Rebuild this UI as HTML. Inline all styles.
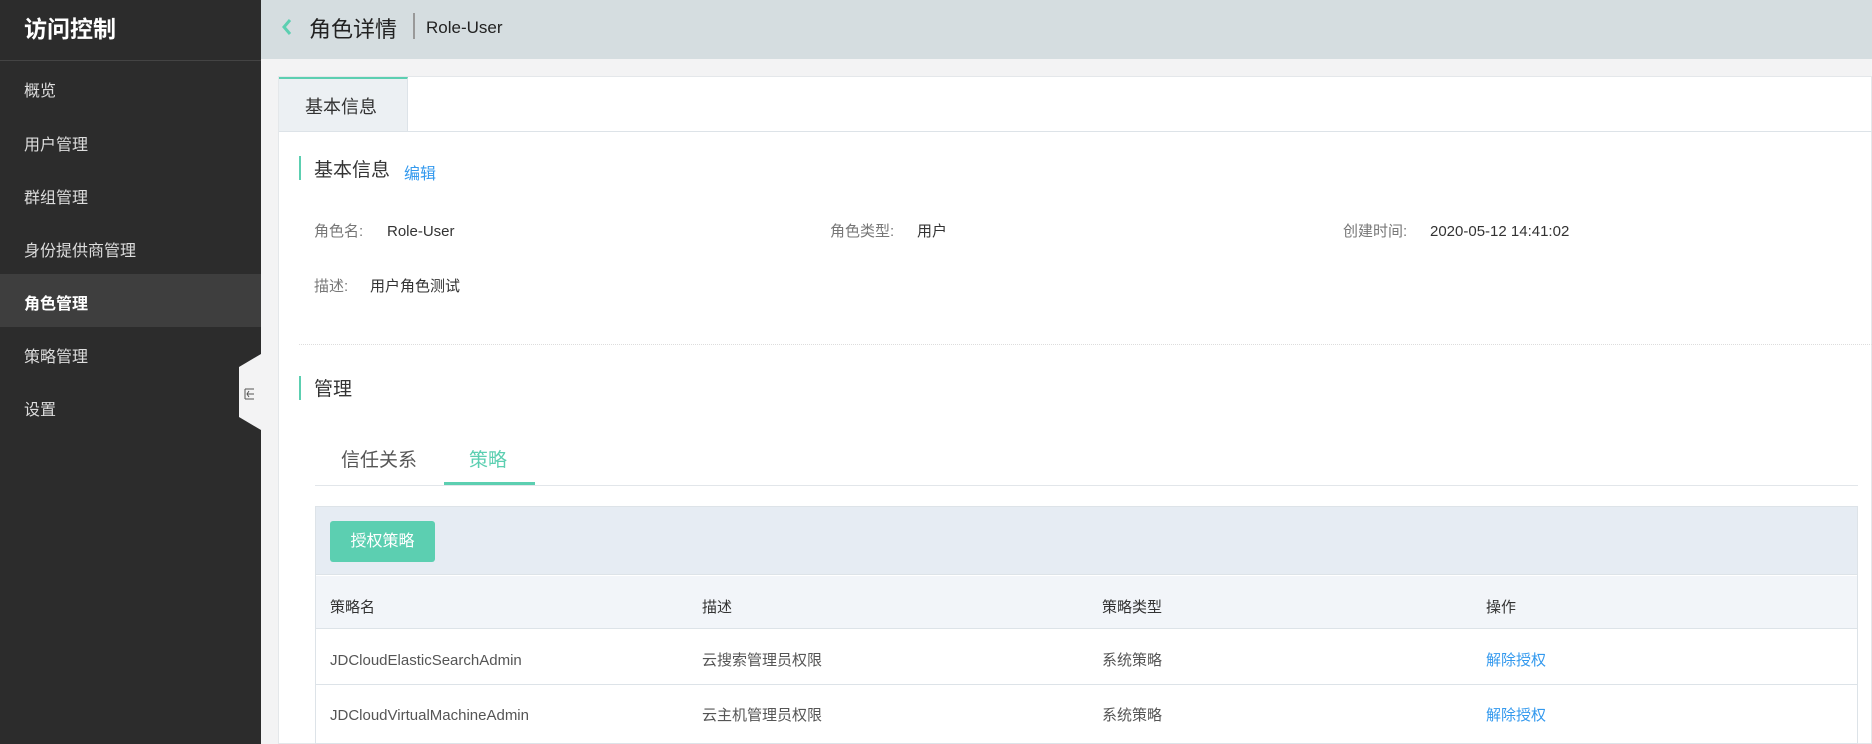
<!DOCTYPE html>
<html><head><meta charset="utf-8"><style>
*{margin:0;padding:0;box-sizing:border-box}
body{width:1872px;height:744px;overflow:hidden;background:#f3f3f4;font-family:"Liberation Sans","Noto Sans CJK SC",sans-serif;position:relative;color:#333}
.a{position:absolute;white-space:nowrap}
.side{left:0;top:0;width:261px;height:744px;background:#2c2c2c}
.mi{left:24px;color:#ddd;font-size:16px}
.lbl{color:#777;font-size:15px}
.val{color:#333;font-size:15px}
.bar{width:2px;background:#5ccfb1}
.td{font-size:15px;color:#555}
</style></head><body>
<div class="a side"></div>
<div class="a" style="left:24px;top:10px;font-size:23px;color:#fff;font-weight:bold">访问控制</div>
<div class="a" style="left:0;top:60px;width:261px;height:1px;background:#444"></div>
<div class="a mi" style="top:77px">概览</div>
<div class="a mi" style="top:131px">用户管理</div>
<div class="a mi" style="top:184px">群组管理</div>
<div class="a mi" style="top:237px">身份提供商管理</div>
<div class="a" style="left:0;top:274px;width:261px;height:53px;background:#3e3e3e"></div>
<div class="a mi" style="top:290px;color:#fff;font-weight:bold">角色管理</div>
<div class="a mi" style="top:343px">策略管理</div>
<div class="a mi" style="top:396px">设置</div>
<svg class="a" style="left:239px;top:354px" width="22" height="76"><polygon points="22,0 0,13 0,63 22,76" fill="#f3f3f4"/><path d="M6 35h9M8 40h7M6 45h9M6 35v10M10 37l-2 3 2 3" stroke="#555" stroke-width="1" fill="none"/></svg>
<div class="a" style="left:261px;top:0;width:1611px;height:59px;background:#d5dde0"></div>
<svg class="a" style="left:280px;top:17px" width="14" height="20"><path d="M10 3L4 10l6 7" stroke="#5ccfb1" stroke-width="3" fill="none"/></svg>
<div class="a" style="left:309px;top:12px;font-size:22px;color:#222">角色详情</div>
<div class="a" style="left:413px;top:13px;width:2px;height:26px;background:#999"></div>
<div class="a" style="left:426px;top:18px;font-size:17px;color:#222">Role-User</div>
<div class="a" style="left:278px;top:76px;width:1594px;height:668px;background:#fff;border:1px solid #e4e7ea"></div>
<div class="a" style="left:279px;top:77px;width:129px;height:54px;background:#ecf0f3;border-top:2px solid #5ccfb1;border-right:1px solid #dde3e8"></div>
<div class="a" style="left:279px;top:131px;width:1593px;height:1px;background:#dde3e8"></div>
<div class="a" style="left:305px;top:93px;font-size:18px;color:#333">基本信息</div>
<div class="a bar" style="left:299px;top:156px;height:24px"></div>
<div class="a" style="left:314px;top:155px;font-size:19px;color:#333">基本信息</div>
<div class="a" style="left:404px;top:160px;font-size:16px;color:#3399ee">编辑</div>
<div class="a lbl" style="left:314px;top:220px">角色名:</div><div class="a val" style="left:387px;top:223px">Role-User</div>
<div class="a lbl" style="left:830px;top:220px">角色类型:</div><div class="a val" style="left:917px;top:220px">用户</div>
<div class="a lbl" style="left:1343px;top:220px">创建时间:</div><div class="a val" style="left:1430px;top:223px">2020-05-12 14:41:02</div>
<div class="a lbl" style="left:314px;top:275px">描述:</div><div class="a val" style="left:370px;top:275px">用户角色测试</div>
<div class="a" style="left:299px;top:344px;width:1573px;border-top:1px dotted #ddd"></div>
<div class="a bar" style="left:299px;top:376px;height:24px"></div>
<div class="a" style="left:314px;top:374px;font-size:19px;color:#333">管理</div>
<div class="a" style="left:341px;top:445px;font-size:19px;color:#555">信任关系</div>
<div class="a" style="left:469px;top:445px;font-size:19px;color:#5ccfb1">策略</div>
<div class="a" style="left:315px;top:485px;width:1543px;height:1px;background:#e2e6ea"></div>
<div class="a" style="left:444px;top:482px;width:91px;height:3px;background:#5ccfb1"></div>
<div class="a" style="left:315px;top:506px;width:1543px;height:238px;border:1px solid #dde3e8"></div>
<div class="a" style="left:316px;top:507px;width:1541px;height:68px;background:#e6ecf3;border-bottom:1px solid #dde3e8"></div>
<div class="a" style="left:330px;top:521px;width:105px;height:41px;background:#5ccfb1;border-radius:3px;color:#fff;font-size:16px;text-align:center;line-height:41px">授权策略</div>
<div class="a" style="left:316px;top:576px;width:1541px;height:53px;background:#f2f5f9;border-bottom:1px solid #dde3e8"></div>
<div class="a" style="left:316px;top:684px;width:1541px;height:1px;background:#dde3e8"></div>
<div class="a td" style="left:330px;top:596px;color:#333">策略名</div>
<div class="a td" style="left:702px;top:596px;color:#333">描述</div>
<div class="a td" style="left:1102px;top:596px;color:#333">策略类型</div>
<div class="a td" style="left:1486px;top:596px;color:#333">操作</div>
<div class="a td" style="left:330px;top:652px">JDCloudElasticSearchAdmin</div>
<div class="a td" style="left:702px;top:649px">云搜索管理员权限</div>
<div class="a td" style="left:1102px;top:649px">系统策略</div>
<div class="a td" style="left:1486px;top:649px;color:#3399ee">解除授权</div>
<div class="a td" style="left:330px;top:707px">JDCloudVirtualMachineAdmin</div>
<div class="a td" style="left:702px;top:704px">云主机管理员权限</div>
<div class="a td" style="left:1102px;top:704px">系统策略</div>
<div class="a td" style="left:1486px;top:704px;color:#3399ee">解除授权</div>
</body></html>
